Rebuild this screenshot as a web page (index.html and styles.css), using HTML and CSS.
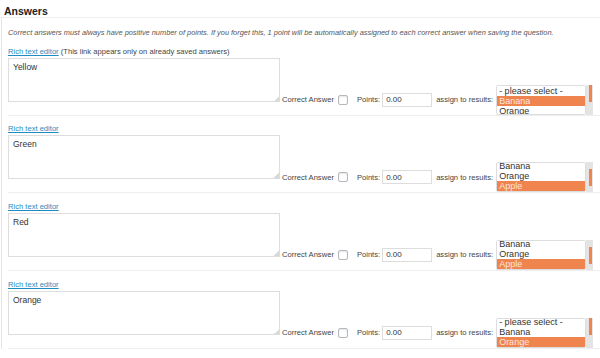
FILE: index.html
```html
<!DOCTYPE html>
<html lang="en">
<head>
  <meta charset="UTF-8"/>
  <title>Answers</title>
  <link rel="stylesheet" href="styles.css">
</head>
<body>

  <div class="postbox">
    <h2 class="hndle">Answers</h2>
    <div class="inside">
      <p class="note">Correct answers must always have positive number of points. If you forget this, 1 point will be automatically assigned to each correct answer when saving the question.</p>

      <div class="answer">
        <div class="editor-link"><a href="#">Rich text editor</a> (This link appears only on already saved answers)</div>
        <div class="answer-row">
          <textarea class="answer-text">Yellow</textarea>
          <div class="answer-fields">
            <label class="correct">Correct Answer <input type="checkbox"></label>
            <label class="points">Points: <input type="text" value="0.00"></label>
            <span class="assign">assign to results:</span>
            <div class="results-box">
              <select class="results" multiple size="3">
                <option>- please select -</option>
                <option selected>Banana</option>
                <option>Orange</option>
                <option>Apple</option>
              </select>
              <span class="scroll-track"><span class="scroll-thumb" style="margin-top: 0px"></span></span>
            </div>
          </div>
        </div>
      </div>

      <div class="answer">
        <div class="editor-link"><a href="#">Rich text editor</a></div>
        <div class="answer-row">
          <textarea class="answer-text">Green</textarea>
          <div class="answer-fields">
            <label class="correct">Correct Answer <input type="checkbox"></label>
            <label class="points">Points: <input type="text" value="0.00"></label>
            <span class="assign">assign to results:</span>
            <div class="results-box">
              <select class="results" multiple size="3">
                <option>- please select -</option>
                <option>Banana</option>
                <option>Orange</option>
                <option selected>Apple</option>
              </select>
              <span class="scroll-track"><span class="scroll-thumb" style="margin-top: 7px"></span></span>
            </div>
          </div>
        </div>
      </div>

      <div class="answer">
        <div class="editor-link"><a href="#">Rich text editor</a></div>
        <div class="answer-row">
          <textarea class="answer-text">Red</textarea>
          <div class="answer-fields">
            <label class="correct">Correct Answer <input type="checkbox"></label>
            <label class="points">Points: <input type="text" value="0.00"></label>
            <span class="assign">assign to results:</span>
            <div class="results-box">
              <select class="results" multiple size="3">
                <option>- please select -</option>
                <option>Banana</option>
                <option>Orange</option>
                <option selected>Apple</option>
              </select>
              <span class="scroll-track"><span class="scroll-thumb" style="margin-top: 7px"></span></span>
            </div>
          </div>
        </div>
      </div>

      <div class="answer">
        <div class="editor-link"><a href="#">Rich text editor</a></div>
        <div class="answer-row">
          <textarea class="answer-text">Orange</textarea>
          <div class="answer-fields">
            <label class="correct">Correct Answer <input type="checkbox"></label>
            <label class="points">Points: <input type="text" value="0.00"></label>
            <span class="assign">assign to results:</span>
            <div class="results-box">
              <select class="results" multiple size="3">
                <option>- please select -</option>
                <option>Banana</option>
                <option selected>Orange</option>
                <option>Apple</option>
              </select>
              <span class="scroll-track"><span class="scroll-thumb" style="margin-top: 0px"></span></span>
            </div>
          </div>
        </div>
      </div>

    </div>
  </div>

</body>
</html>
```

FILE: styles.css
```css
html, body {
  margin: 0;
  padding: 0;
  background: #fff;
  font-family: "Liberation Sans", Arial, sans-serif;
  color: #444;
  overflow: hidden;
}

.postbox {
  width: 600px;
}

.hndle {
  margin: 0;
  padding: 7px 4px 2px;
  font-size: 10.5px;
  line-height: 8px;
  font-weight: bold;
  color: #222;
  border-bottom: 1px solid #eee;
}

.inside {
  border-left: 1px solid #e5e5e5;
  margin-left: 1px;
  padding: 0 0 0 6px;
}

.note {
  margin: 0;
  padding: 10px 0 0 0;
  font-size: 7.4px;
  line-height: 10px;
  font-style: italic;
  color: #555;
}

/* one answer block */
.answer {
  border-bottom: 1px solid #eee;
  padding-top: 9.5px;
}

.editor-link {
  font-size: 7.6px;
  line-height: 8px;
  color: #444;
}

.editor-link a {
  color: #1e8cbe;
}

.answer-row {
  display: flex;
  align-items: flex-start;
  padding-top: 2px;
  height: 57.2px;
}

.answer-text {
  width: 272px;
  height: 44px;
  box-sizing: border-box;
  margin: 0;
  padding: 3px 4px;
  border: 1px solid #ddd;
  font-family: inherit;
  font-size: 8.5px;
  color: #333;
  resize: none;
  background: #fff linear-gradient(135deg, transparent 50%, #d8d8d8 50%) no-repeat right bottom / 5px 5px;
}

.answer-fields {
  display: flex;
  align-items: center;
  margin-top: 27px;
  margin-left: 2px;
  font-size: 7.6px;
}

.correct,
.points {
  display: flex;
  align-items: center;
}

.correct input {
  -webkit-appearance: none;
  appearance: none;
  width: 10px;
  height: 10px;
  margin: 0 0 0 4px;
  border: 1px solid #b4b9be;
  border-radius: 2px;
  background: #fff;
  box-shadow: inset 0 1px 2px rgba(0, 0, 0, 0.1);
}

.points {
  margin-left: 9px;
}

.points input {
  width: 50px;
  height: 14px;
  box-sizing: border-box;
  margin: 0 0 0 2px;
  padding: 0 3px;
  border: 1px solid #ddd;
  font-family: inherit;
  font-size: 8px;
  color: #333;
}

.assign {
  margin-left: 4px;
}

.results-box {
  display: flex;
  margin-left: 3px;
  height: 30px;
  box-sizing: border-box;
}

.results {
  width: 90px;
  height: 30px;
  box-sizing: border-box;
  padding: 0;
  border: 1px solid #ddd;
  font-family: inherit;
  font-size: 9px;
  color: #333;
  scrollbar-width: none;
}

.results::-webkit-scrollbar {
  display: none;
}

.results option {
  padding: 0 2px;
  line-height: 9.5px;
  min-height: 0;
}

.results option:checked {
  background: #f0844f linear-gradient(#f0844f, #f0844f);
  color: #fde6da;
}

.scroll-track {
  display: block;
  width: 7px;
  height: 30px;
  box-sizing: border-box;
  padding: 0 1px 0 3px;
  background: #e4e4e4;
}

.scroll-thumb {
  display: block;
  width: 3px;
  height: 17px;
  background: #f0844f;
}
```
